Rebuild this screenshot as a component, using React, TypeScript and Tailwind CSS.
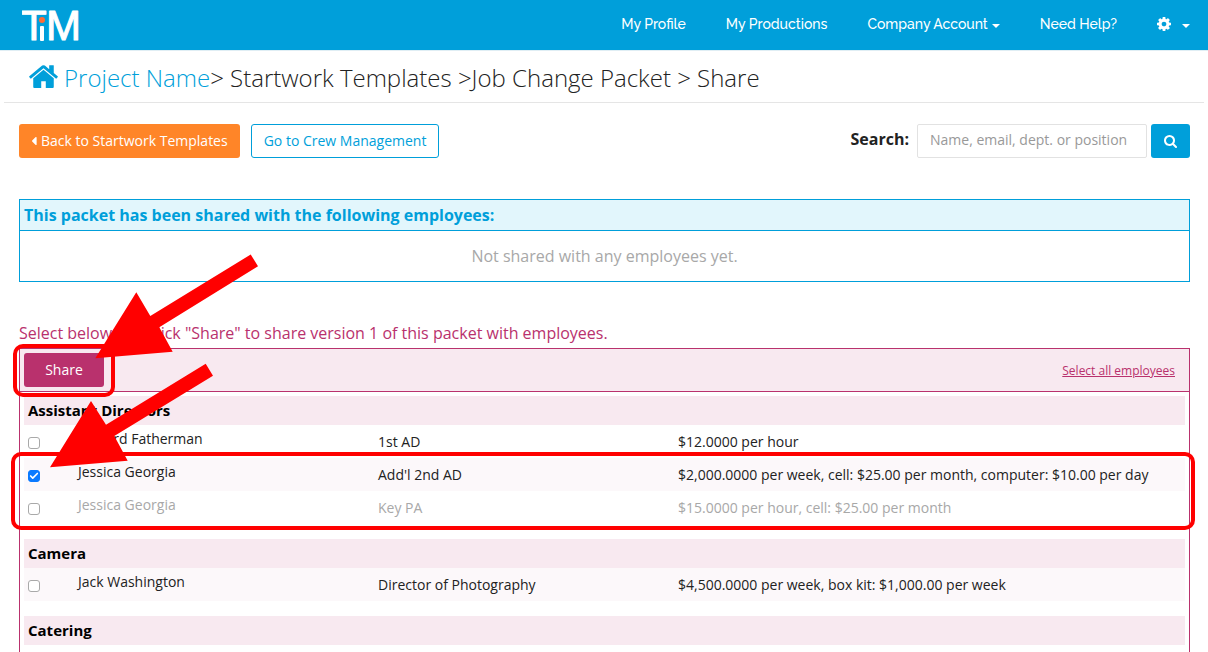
import React from 'react';
import { Check } from 'lucide-react';
import { FaCaretLeft } from 'react-icons/fa';

interface Employee {
    id: number;
    name: string;
    position: string;
    rate: string;
    checked?: boolean;
    disabled?: boolean;
    striped?: boolean;
}

interface Department {
    title: string;
    employees: Employee[];
}

const departments: Department[] = [
    {
        title: 'Assistant Directors',
        employees: [
            { id: 1, name: 'Richard Fatherman', position: '1st AD', rate: '$12.0000 per hour' },
            {
                id: 2,
                name: 'Jessica Georgia',
                position: "Add'l 2nd AD",
                rate: '$2,000.0000 per week, cell: $25.00 per month, computer: $10.00 per day',
                checked: true,
                striped: true,
            },
            { id: 3, name: 'Jessica Georgia', position: 'Key PA', rate: '$15.0000 per hour, cell: $25.00 per month', disabled: true },
        ],
    },
    {
        title: 'Camera',
        employees: [
            {
                id: 4,
                name: 'Jack Washington',
                position: 'Director of Photography',
                rate: '$4,500.0000 per week, box kit: $1,000.00 per week',
                striped: true,
            },
        ],
    },
    { title: 'Catering', employees: [] },
];

const HomeIcon = () => (
    <svg viewBox="88 245 1616 1291" className="w-[29px] h-[23px] mb-[2px] shrink-0" fill="currentColor" aria-hidden="true">
        <path d="M1472 992v480q0 26-19 45t-45 19h-384v-384h-256v384h-384q-26 0-45-19t-19-45v-480q0-1 .5-3t.5-3l575-474 575 474q1 2 1 6zm223-69l-62 74q-8 9-21 11h-3q-13 0-21-7l-692-577-692 577q-12 8-24 7-13-2-21-11l-62-74q-8-10-7-23.5t11-21.5l719-599q32-26 76-26t76 26l244 204v-195q0-14 9-23t23-9h192q14 0 23 9t9 23v408l219 182q10 8 11 21.5t-7 23.5z" />
    </svg>
);

const SearchIcon = () => (
    <svg viewBox="64 128 1664 1664" className="w-[13px] h-[13px]" fill="currentColor" aria-hidden="true">
        <path d="M1216 832q0-185-131.5-316.5t-316.5-131.5-316.5 131.5-131.5 316.5 131.5 316.5 316.5 131.5 316.5-131.5 131.5-316.5zm512 832q0 52-38 90t-90 38q-54 0-90-38l-343-342q-179 124-399 124-143 0-273.5-55.5t-225-150-150-225-55.5-273.5 55.5-273.5 150-225 225-150 273.5-55.5 273.5 55.5 225 150 150 225 55.5 273.5q0 220-124 399l343 343q37 37 37 90z" />
    </svg>
);

const GearIcon = () => (
    <svg viewBox="128 128 1536 1536" className="w-[14px] h-[14px]" fill="currentColor" aria-hidden="true">
        <path d="M1152 896q0-106-75-181t-181-75-181 75-75 181 75 181 181 75 181-75 75-181zm512-109v222q0 12-8 23t-20 13l-185 28q-19 54-39 91 35 50 107 138 10 12 10 25t-9 23q-27 37-99 108t-94 71q-12 0-26-9l-138-108q-44 23-91 38-16 136-29 186-7 28-36 28h-222q-14 0-24.5-8.5t-11.5-21.5l-28-184q-49-16-90-37l-141 107q-10 9-25 9-14 0-25-11-126-114-165-168-7-10-7-23 0-12 8-23 15-21 51-66.5t54-70.5q-27-50-41-99l-183-27q-13-2-21-12.5t-8-23.5v-222q0-12 8-23t19-13l186-28q14-46 39-92-40-57-107-138-10-12-10-24 0-10 9-23 26-36 98.5-107.5t94.5-71.5q13 0 26 10l138 107q44-23 91-38 16-136 29-186 7-28 36-28h222q14 0 24.5 8.5t11.5 21.5l28 184q49 16 90 37l142-107q9-9 24-9 13 0 25 10 129 119 165 170 7 8 7 22 0 12-8 23-15 21-51 66.5t-54 70.5q26 50 41 98l183 28q13 2 21 12.5t8 23.5z" />
    </svg>
);

const Caret = () => (
    <svg viewBox="0 0 8 4" className="w-2 h-1 mt-[3px]" fill="currentColor" aria-hidden="true">
        <path d="M0 0h8L4 4z" />
    </svg>
);

const Logo = () => (
    <svg viewBox="0 -6 60 48" className="block w-[60px] h-12" role="img" aria-label="TiM">
        <g fill="#fff" stroke="#fff" strokeWidth="1" strokeLinejoin="round" fontFamily="'Liberation Sans', sans-serif" fontSize="42">
            <text x="-1" y="33">T</text>
            <text x="24" y="33">M</text>
        </g>
        <rect x="18" y="19" width="4" height="15" rx="1" fill="#fff" />
        <circle cx="20" cy="13" r="3" fill="#ff6b35" />
    </svg>
);

const Navbar = () => (
    <header className="flex items-center justify-between h-[51px] pl-[22px] pr-[18px] bg-[#009fda] border-b border-[#e0eef4] text-white">
        <a href="#home">
            <Logo />
        </a>
        <nav className="flex items-center gap-10 pb-[2px] font-[Raleway,Lato,sans-serif] text-sm font-medium">
            <a href="#profile">My Profile</a>
            <a href="#productions">My Productions</a>
            <button type="button" className="flex items-center gap-1">
                Company Account
                <Caret />
            </button>
            <a href="#help">Need Help?</a>
            <button type="button" className="flex items-center gap-[11px]" aria-label="Settings">
                <GearIcon />
                <Caret />
            </button>
        </nav>
    </header>
);

const EmployeeRow = ({ employee }: { employee: Employee }) => (
    <tr className={`h-[33px] ${employee.striped ? 'bg-[#fcf8fa]' : ''} ${employee.disabled ? 'text-[#a8a8a8]' : 'text-[#222]'}`}>
        <td className="pl-1 pt-[2px]">
            <div className="grid w-3 h-3 place-items-center">
                <input
                    id={`employee-${employee.id}`}
                    type="checkbox"
                    defaultChecked={employee.checked}
                    className="peer col-start-1 row-start-1 w-3 h-3 appearance-none rounded-[3px] border border-[#a9a9a9] bg-white checked:border-[#0a7aff] checked:bg-[#0a7aff]"
                />
                <Check size={10} strokeWidth={4} className="col-start-1 row-start-1 hidden peer-checked:block text-white pointer-events-none" />
            </div>
        </td>
        <td className="pb-[6px]">
            <label htmlFor={`employee-${employee.id}`}>{employee.name}</label>
        </td>
        <td>{employee.position}</td>
        <td>{employee.rate}</td>
    </tr>
);

// Red arrows pointing at the Share button and the ticked row
const Arrows = () => (
    <svg width="280" height="240" viewBox="0 240 280 240" className="absolute -left-5 -top-[109px] pointer-events-none" fill="#f00" aria-hidden="true">
        <path d="M250.7 254.5L258 266.3L159.3 327.3L172.7 351.7L95.3 358.3L136.3 292.3L150.3 316Z" />
        <path d="M205.7 363.7L213 375.7L114.3 436L127.7 460.7L50 467.3L91 401L106 424.7Z" />
    </svg>
);

export default function App() {
    return (
        <div className="min-h-screen bg-white font-['Open_Sans',sans-serif] text-sm text-[#222]">
            <Navbar />

            <h1 className="flex items-center mx-1 h-[52px] pl-[25px] pt-[2px] border-b border-[#e5e5e5] text-2xl font-light">
                <a href="#project" className="flex items-center gap-[6px] text-[#009fda]">
                    <HomeIcon />
                    Project Name
                </a>
                <span>&gt; Startwork Templates &gt;Job Change Packet &gt; Share</span>
            </h1>

            <main className="pl-[19px] pr-[18px]">
                <div className="flex items-center justify-between pt-[21px]">
                    <div className="flex gap-[11px]">
                        <a href="#templates" className="flex items-center h-[34px] px-3 rounded-[3px] bg-[#ff8528] text-white font-medium">
                            <FaCaretLeft size={14} className="-ml-1" />
                            Back to Startwork Templates
                        </a>
                        <a href="#crew" className="flex items-center h-[34px] px-3 rounded-[3px] border border-[#009fda] text-[#009fda] font-medium">
                            Go to Crew Management
                        </a>
                    </div>
                    <form className="flex items-center" onSubmit={(e) => e.preventDefault()}>
                        <label htmlFor="search" className="mr-2 pb-1 text-base font-bold">Search:</label>
                        <input
                            id="search"
                            type="text"
                            placeholder="Name, email, dept. or position"
                            className="w-[230px] h-[34px] px-3 pb-1 mr-1 rounded-[2px] border border-[#e2e2e2] placeholder:text-[#999]"
                        />
                        <button type="submit" aria-label="Search" className="flex items-center justify-center w-[39px] h-[34px] rounded-[3px] bg-[#009fda] text-white">
                            <SearchIcon />
                        </button>
                    </form>
                </div>

                <section className="mt-[41px] border border-[#009fda] text-base">
                    <h2 className="px-1 h-[31px] leading-[30px] border-b border-[#009fda] bg-[#e2f6fc] text-[#009fda] font-bold">
                        This packet has been shared with the following employees:
                    </h2>
                    <p className="h-[50px] leading-[50px] text-center text-[#a8a8a8]">Not shared with any employees yet.</p>
                </section>

                <p className="mt-[39px] h-[27px] leading-6 text-base text-[#b9316d]">
                    Select below and click "Share" to share version 1 of this packet with employees.
                </p>

                <section className="relative border border-[#b9316d]">
                    <div className="flex items-center justify-between h-[43px] pl-1 pr-[14px] border-b border-[#b9316d] bg-[#f8e9f0]">
                        <div className="relative">
                            <button type="button" className="block w-20 h-[34px] rounded-[3px] bg-[#b9316d] text-white font-medium">
                                Share
                            </button>
                            <div className="absolute -inset-x-[11px] -top-[9px] -bottom-[10px] border-4 border-[#f00] rounded-[10px] pointer-events-none" />
                        </div>
                        <a href="#all" className="pt-[2px] text-xs text-[#b9316d] underline">Select all employees</a>
                    </div>

                    <div className="px-1 pt-1">
                        {departments.map((department) => (
                            <table key={department.title} className="w-full mb-[15px] table-fixed text-left">
                                <colgroup>
                                    <col className="w-[54px]" />
                                    <col className="w-[300px]" />
                                    <col className="w-[300px]" />
                                    <col />
                                </colgroup>
                                <thead>
                                    <tr className="h-[29px] bg-[#f8e9f0] text-[15px] leading-5 text-black">
                                        <th colSpan={4} className="pl-1 pb-[2px] font-bold">{department.title}</th>
                                    </tr>
                                </thead>
                                <tbody>
                                    {department.employees.map((employee) => (
                                        <EmployeeRow key={employee.id} employee={employee} />
                                    ))}
                                </tbody>
                            </table>
                        ))}
                    </div>

                    <div className="absolute -left-[9px] -right-[6px] top-[103px] h-[78px] border-4 border-[#f00] rounded-[10px] pointer-events-none" />
                    <Arrows />
                </section>
            </main>
        </div>
    );
}
